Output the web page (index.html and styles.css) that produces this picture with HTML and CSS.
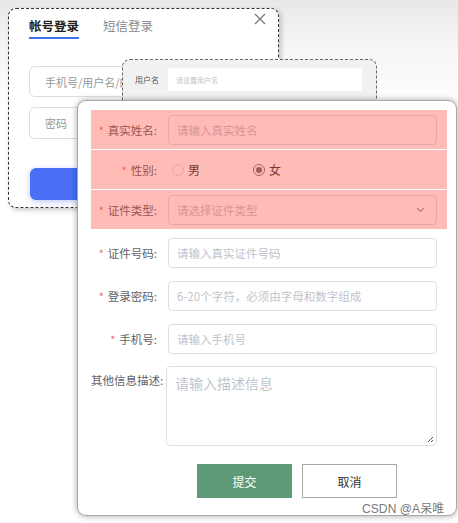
FILE: index.html
```html
<!DOCTYPE html>
<html lang="zh-CN">
<head>
<meta charset="utf-8">
<title>注册</title>
<link rel="stylesheet" href="styles.css">
</head>
<body>
<div class="desk">
  <section class="login">
    <div class="tabs">
      <span class="tab active">帐号登录</span>
      <span class="tab">短信登录</span>
    </div>
    <svg class="close" width="12" height="12" viewBox="0 0 12 12"><path d="M1 1L11 11M11 1L1 11" stroke="#7a7a7a" stroke-width="1.3" fill="none"/></svg>
    <div class="lfield lfield-1"><span class="lph">手机号/用户名/邮箱</span></div>
    <div class="lfield lfield-2"><span class="lph">密码</span></div>
    <div class="lbtn"></div>
  </section>

  <section class="reg">
    <div class="reg-row">
      <span class="reg-label">用户名</span>
      <span class="reg-input">请设置用户名</span>
    </div>
  </section>

  <section class="main">
    <form class="form">
      <div class="row hl">
        <label class="label"><i class="req">*</i>真实姓名:</label>
        <div class="input"><span class="ph">请输入真实姓名</span></div>
      </div>
      <div class="row hl">
        <label class="label"><i class="req">*</i>性别:</label>
        <div class="radios">
          <span class="radio"><span class="dot"></span>男</span>
          <span class="radio checked"><span class="dot"></span>女</span>
        </div>
      </div>
      <div class="row hl row-last-hl">
        <label class="label"><i class="req">*</i>证件类型:</label>
        <div class="input select"><span class="ph">请选择证件类型</span>
          <svg class="chev" width="9" height="6" viewBox="0 0 9 6"><path d="M1 1L4.5 4.5L8 1" stroke="#999" stroke-width="1.1" fill="none"/></svg>
        </div>
      </div>
      <div class="row">
        <label class="label"><i class="req">*</i>证件号码:</label>
        <div class="input"><span class="ph">请输入真实证件号码</span></div>
      </div>
      <div class="row">
        <label class="label"><i class="req">*</i>登录密码:</label>
        <div class="input"><span class="ph">6-20个字符，必须由字母和数字组成</span></div>
      </div>
      <div class="row">
        <label class="label"><i class="req">*</i>手机号:</label>
        <div class="input"><span class="ph">请输入手机号</span></div>
      </div>
      <div class="row row-area">
        <label class="label">其他信息描述:</label>
        <div class="textarea"><span class="ph ph-big">请输入描述信息</span>
          <svg class="grip" width="8" height="8" viewBox="0 0 8 8"><path d="M7 2L2 7M7 5L5 7" stroke="#555" stroke-width="1" fill="none"/></svg>
        </div>
      </div>
      <div class="actions">
        <span class="btn btn-ok">提交</span>
        <span class="btn btn-cancel">取消</span>
      </div>
    </form>
  </section>

  <div class="mark">CSDN @A呆唯</div>
</div>
</body>
</html>
```

FILE: styles.css
```css
* { box-sizing: border-box; }
html, body { margin: 0; padding: 0; }
body {
  width: 458px;
  height: 523px;
  overflow: hidden;
  background: linear-gradient(#e8e8e8 0px, #f6f6f6 50px, #ffffff 110px);
  font-family: "Noto Sans CJK SC", "Noto Sans", "Liberation Sans", sans-serif;
  color: #606266;
}
.desk { position: relative; width: 458px; height: 523px; }

/* back login card */
.login {
  position: absolute;
  left: 8px; top: 8px;
  width: 271px; height: 200px;
  background: #fff;
  border: 1px dashed #333;
  border-radius: 8px;
  box-shadow: 2px 2px 5px rgba(0,0,0,0.22);
  padding: 0 0 0 20px;
}
.tabs { display: flex; gap: 24px; padding-top: 8px; }
.tab { font-size: 12.5px; line-height: 17px; color: #8a8a8a; padding-bottom: 3px; border-bottom: 2px solid transparent; }
.tab.active { color: #222; font-weight: bold; border-bottom-color: #3f6ff2; }
.close { position: absolute; right: 12px; top: 4px; }
.lfield {
  width: 230px;
  border: 1px solid #dcdcdc;
  border-radius: 6px;
  padding-left: 15px;
  display: flex; align-items: center;
}
.lph {
  display: block;
  max-width: 77px;
  overflow: hidden;
  white-space: nowrap;
  font-size: 11px;
  color: #999;
}
.lfield-1 { margin-top: 27px; height: 31px; }
.lfield-2 { margin-top: 10px; height: 32px; }
.lbtn {
  margin-top: 29px;
  width: 229px; height: 32px;
  margin-left: 1px;
  background: #4a6ef6;
  border-radius: 6px;
  box-shadow: 0 2px 6px rgba(74,110,246,0.35);
}

/* middle register card */
.reg {
  position: absolute;
  left: 122px; top: 59px;
  width: 255px; height: 80px;
  background: #f1f1f1;
  border: 1px dashed #666;
  border-radius: 8px;
  padding: 8px 0 0 12px;
}
.reg-row { display: flex; align-items: center; }
.reg-label { width: 33px; font-size: 8px; color: #555; }
.reg-input {
  width: 194px; height: 23px;
  background: #fff;
  font-size: 7px; color: #c4c4c4;
  padding-left: 8px;
  display: flex; align-items: center;
}

/* main form card */
.main {
  position: absolute;
  left: 77px; top: 100px;
  width: 380px; height: 416px;
  background: #fff;
  border: 1px solid #a9a9a9;
  border-radius: 9px;
  box-shadow: 0 0 6px rgba(0,0,0,0.35);
  padding: 9px 9px 0 13px;
}
.form { display: flex; flex-direction: column; }
.row {
  position: relative;
  display: flex;
  align-items: center;
  height: 40px;
  padding-right: 10px;
  margin-bottom: 3px;
}
.row.hl { height: 39px; margin-bottom: 1px; }
.row.hl::after {
  content: "";
  position: absolute; inset: 0;
  background: rgba(255, 60, 43, 0.345);
  pointer-events: none;
}
.row-last-hl { margin-bottom: 4px !important; }
.label {
  width: 72px;
  flex: none;
  text-align: right;
  padding-right: 6px;
  font-size: 11.5px;
  color: #606266;
  white-space: nowrap;
}
.req { font-style: normal; color: #f56c6c; margin-right: 4px; font-size: 11px; }
.input {
  flex: 1;
  height: 30px;
  margin-left: 5px;
  border: 1px solid #dcdfe6;
  border-radius: 4px;
  background: #fff;
  display: flex; align-items: center;
  padding-left: 8px;
}
.ph { font-size: 11.5px; color: #c0c4cc; white-space: nowrap; }
.ph-big { font-size: 14px; }
.select { justify-content: space-between; padding-right: 11px; }
.radios { display: flex; margin-left: 9px; }
.radio { display: flex; align-items: center; font-size: 12px; color: #333; width: 81px; }
.radio .dot {
  width: 12px; height: 12px;
  border: 1px solid #dcdfe6;
  border-radius: 50%;
  background: #fff;
  margin-right: 4px;
  position: relative;
}
.radio.checked .dot { border-color: #7a7a7a; background: #fff; }
.radio.checked .dot::after {
  content: ""; position: absolute; left: 2px; top: 2px;
  width: 6px; height: 6px; border-radius: 50%; background: #6f6f6f;
}
.row-area { height: auto; align-items: flex-start; padding-top: 4px; margin-bottom: 0; }
.row-area .label { padding-top: 6px; }
.textarea {
  position: relative;
  flex: 1;
  height: 80px;
  margin-left: 3px;
  border: 1px solid #dcdfe6;
  border-radius: 4px;
  padding: 3px 8px;
}
.grip { position: absolute; right: 2px; bottom: 2px; }
.actions { display: flex; gap: 10px; margin-top: 18px; padding-left: 106px; }
.btn {
  width: 95px; height: 34px;
  display: flex; align-items: center; justify-content: center;
  font-size: 12px;
}
.btn-ok { background: #5e9a77; color: #fff; }
.btn-cancel { background: #fff; border: 1px solid #a8a8a8; color: #333; }

.mark {
  position: absolute;
  left: 362px; top: 499px;
  font-size: 12px;
  color: #7a7a7a;
  font-family: "Liberation Sans", "Noto Sans CJK SC", sans-serif;
  letter-spacing: 0.1px;
}
```
